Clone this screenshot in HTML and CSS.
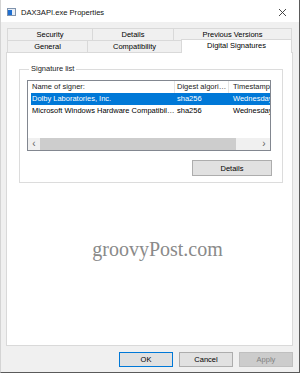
FILE: index.html
```html
<!DOCTYPE html>
<html lang="en">
<head>
    <meta charset="UTF-8">
    <title>DAX3API.exe Properties</title>
    <link rel="stylesheet" href="styles.css">
</head>
<body>
    <div class="window">
        <div class="titlebar">
            <svg class="app-icon" width="9" height="8" viewBox="0 0 9 8">
                <rect x="0.5" y="0.5" width="8" height="7" fill="#e8eef6" stroke="#7f93ad"/>
                <rect x="1" y="2" width="4" height="5" fill="#1f6fd0"/>
            </svg>
            <span class="title">DAX3API.exe Properties</span>
            <svg class="close" width="9" height="9" viewBox="0 0 9 9">
                <path d="M1 1 L8 8 M8 1 L1 8" stroke="#333" stroke-width="0.9"/>
            </svg>
        </div>

        <div class="body">
            <div class="tabs">
                <div class="tab-row">
                    <div class="tab w-security">Security</div>
                    <div class="tab w-details">Details</div>
                    <div class="tab w-prev">Previous Versions</div>
                </div>
                <div class="tab-row">
                    <div class="tab w-general">General</div>
                    <div class="tab w-compat">Compatibility</div>
                    <div class="tab w-digital active">Digital Signatures</div>
                </div>
            </div>

            <div class="panel">
                <fieldset class="group">
                    <legend>Signature list</legend>
                    <div class="listview">
                        <div class="list-head">
                            <div class="col">Name of signer:</div>
                            <div class="col">Digest algorithm</div>
                            <div class="col last">Timestamp</div>
                        </div>
                        <div class="list-row selected">
                            <div class="col">Dolby Laboratories, Inc.</div>
                            <div class="col">sha256</div>
                            <div class="col last">Wednesday, October 3, 2018</div>
                        </div>
                        <div class="list-row">
                            <div class="col">Microsoft Windows Hardware Compatibility Publisher</div>
                            <div class="col">sha256</div>
                            <div class="col last">Wednesday, October 3, 2018</div>
                        </div>
                        <div class="list-fill"></div>
                        <div class="hscroll">
                            <span class="arrow">&#8249;</span>
                            <div class="track"><div class="thumb"></div></div>
                            <span class="arrow">&#8250;</span>
                        </div>
                    </div>
                    <div class="group-actions">
                        <button class="btn wide">Details</button>
                    </div>
                </fieldset>

                <div class="watermark">groovyPost.com</div>
            </div>

            <div class="dialog-buttons">
                <button class="btn default">OK</button>
                <button class="btn">Cancel</button>
                <button class="btn disabled">Apply</button>
            </div>
        </div>
    </div>
</body>
</html>
```

FILE: styles.css
```css
* {
    margin: 0;
    padding: 0;
    box-sizing: border-box;
}

body {
    background: #ffffff;
    font-family: 'Liberation Sans', Arial, sans-serif;
    font-size: 7.5px;
    color: #000;
}

.window {
    width: 300px;
    height: 373px;
    display: flex;
    flex-direction: column;
    border-left: 1px solid #d4d4d4;
    border-right: 1px solid #5a5a5a;
    border-bottom: 1px solid #5a5a5a;
    overflow: hidden;
}

/* title bar */
.titlebar {
    height: 22px;
    background: #fff;
    display: flex;
    align-items: center;
    padding: 2px 0 0 6px;
}

.app-icon {
    margin-right: 5px;
}

.title {
    font-size: 7.6px;
    color: #111;
    flex: 1;
}

.close {
    margin-right: 12px;
}

/* dialog body */
.body {
    flex: 1;
    background: #f0f0f0;
    padding: 6px 6px 0 5px;
    display: flex;
    flex-direction: column;
}

.tabs {
    display: flex;
    flex-direction: column;
    padding-left: 1px;
}

.tab-row {
    display: flex;
    height: 12px;
}

.tab {
    height: 12px;
    line-height: 11px;
    text-align: center;
    border: 1px solid #d9d9d9;
    border-bottom: none;
    margin-right: -1px;
    background: #f0f0f0;
    white-space: nowrap;
}

.tab.active {
    background: #fff;
    height: 14px;
    margin-top: -1px;
    position: relative;
    z-index: 2;
    line-height: 12px;
}

.w-security { width: 86px; }
.w-details { width: 82px; }
.w-prev { width: 119px; }
.w-general { width: 81px; }
.w-compat { width: 95px; }
.w-digital { width: 111px; }

.panel {
    flex: 1;
    background: #fff;
    border: 1px solid #d9d9d9;
    display: flex;
    flex-direction: column;
}

.group {
    margin: 11px 9px 0 12px;
    border: 1px solid #dcdcdc;
    padding: 6px 11px 6px 7px;
}

.group legend {
    margin-left: 2px;
    padding: 0 2px;
    line-height: 10px;
    color: #222;
}

.listview {
    height: 71px;
    border: 1px solid #828790;
    display: flex;
    flex-direction: column;
    overflow: hidden;
}

.list-head {
    display: grid;
    grid-template-columns: 147px 54px 1fr;
    height: 12px;
    line-height: 11px;
    color: #222;
}

.list-head .col {
    padding-left: 4px;
    border-right: 1px solid #e5e5e5;
}

.list-head .col:nth-child(2) {
    padding-left: 2px;
}

.list-head .col.last {
    border-right: none;
}

.list-row {
    display: grid;
    grid-template-columns: 144px 54px 1fr;
    height: 12px;
    line-height: 12px;
    margin-left: 3px;
}

.col {
    white-space: nowrap;
    overflow: hidden;
    text-overflow: ellipsis;
}

.list-row .col:first-child {
    padding-left: 1px;
}

.list-row .col:nth-child(2) {
    padding-left: 2px;
}

.col.last {
    padding-left: 4px;
    text-overflow: clip;
}

.list-head .col.last {
    padding-left: 4px;
}

.list-row.selected {
    background: #0078d7;
    color: #fff;
}

.list-fill {
    flex: 1;
}

.hscroll {
    height: 12px;
    display: flex;
    align-items: center;
    background: #f0f0f0;
}

.arrow {
    width: 12px;
    text-align: center;
    font-size: 10px;
    line-height: 12px;
    color: #606060;
}

.track {
    flex: 1;
    height: 12px;
}

.thumb {
    width: 196px;
    height: 12px;
    background: #cdcdcd;
}

.group-actions {
    display: flex;
    justify-content: flex-end;
    margin-top: 9px;
    margin-right: -1px;
}

.btn {
    font-family: 'Liberation Sans', Arial, sans-serif;
    font-size: 7.5px;
    height: 15px;
    width: 54px;
    background: #e1e1e1;
    border: 1px solid #adadad;
    color: #000;
}

.btn.wide {
    width: 80px;
    height: 16px;
}

.btn.default {
    border-color: #0078d7;
}

.btn.disabled {
    background: #cccccc;
    border-color: #bfbfbf;
    color: #838383;
}

.watermark {
    margin-top: 54px;
    padding-left: 16px;
    text-align: center;
    font-family: 'Liberation Serif', 'Times New Roman', serif;
    font-size: 20px;
    line-height: 24px;
    color: #8a8a8a;
}

.dialog-buttons {
    display: flex;
    justify-content: flex-end;
    gap: 6px;
    padding: 6px 0 5px 0;
}
```
